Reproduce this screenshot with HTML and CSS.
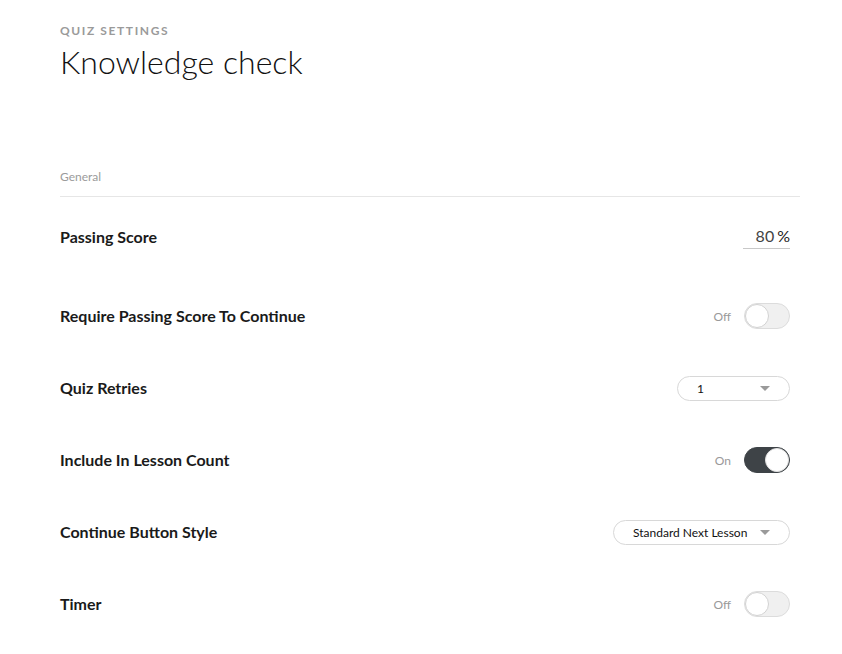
FILE: index.html
```html
<!DOCTYPE html>
<html lang="en">
  <head>
    <meta charset="UTF-8" />
    <title>Quiz Settings</title>
    <link rel="stylesheet" href="styles.css">
  </head>
  <body>
    <div class="page">
      <div class="header">
        <div class="eyebrow">Quiz Settings</div>
        <h1 class="title">Knowledge check</h1>
      </div>

      <div class="section">
        <div class="section-label">General</div>

        <div class="row row-first">
          <div class="label">Passing Score</div>
          <div class="score">
            <span class="score-value">80</span><span class="score-unit">%</span>
          </div>
        </div>

        <div class="row">
          <div class="label">Require Passing Score To Continue</div>
          <div class="control">
            <span class="state">Off</span>
            <span class="toggle"><span class="knob"></span></span>
          </div>
        </div>

        <div class="row">
          <div class="label">Quiz Retries</div>
          <div class="select select-small">
            <span class="select-text">1</span>
            <span class="caret"></span>
          </div>
        </div>

        <div class="row">
          <div class="label">Include In Lesson Count</div>
          <div class="control">
            <span class="state">On</span>
            <span class="toggle on"><span class="knob"></span></span>
          </div>
        </div>

        <div class="row">
          <div class="label">Continue Button Style</div>
          <div class="select select-wide">
            <span class="select-text">Standard Next Lesson</span>
            <span class="caret"></span>
          </div>
        </div>

        <div class="row">
          <div class="label">Timer</div>
          <div class="control">
            <span class="state">Off</span>
            <span class="toggle"><span class="knob"></span></span>
          </div>
        </div>
      </div>
    </div>
  </body>
</html>
```

FILE: styles.css
```css
body {
  margin: 0;
  background: #fff;
  font-family: Lato, "Open Sans", sans-serif;
  color: #1b1b1b;
}
.page {
  width: 740px;
  padding: 23px 0 0 60px;
}
.eyebrow {
  font-size: 12px;
  font-weight: 700;
  letter-spacing: 1.6px;
  text-transform: uppercase;
  color: #9a9a9a;
  line-height: 15px;
}
.title {
  margin: 4px 0 0;
  font-size: 32px;
  font-weight: 300;
  line-height: 40px;
  color: #111;
}
.section {
  margin-top: 87px;
}
.section-label {
  font-size: 12px;
  color: #9b9b9b;
  padding-bottom: 12px;
  border-bottom: 1px solid #e6e6e6;
}
.row {
  display: flex;
  justify-content: space-between;
  align-items: center;
  height: 72px;
  padding-right: 10px;
}
.row-first {
  margin-top: 4px;
  height: 72px;
  margin-bottom: 7px;
}
.label {
  font-size: 16px;
  font-weight: 700;
  color: #1a1a1a;
  margin-bottom: 2px;
}
.score {
  width: 47px;
  text-align: right;
  border-bottom: 1px solid #c8c8c8;
  padding-bottom: 3px;
  font-size: 16px;
  color: #444;
  margin-top: 1px;
}
.score-unit {
  margin-left: 3px;
  color: #1b1b1b;
}
.control {
  display: flex;
  align-items: center;
  gap: 13px;
}
.state {
  font-size: 12px;
  color: #999;
}
.toggle {
  position: relative;
  width: 44px;
  height: 24px;
  border: 1px solid #dcdcdc;
  border-radius: 13px;
  background: #f0f0f0;
  box-sizing: content-box;
}
.knob {
  position: absolute;
  top: 0;
  left: 0;
  width: 22px;
  height: 22px;
  border: 1px solid #d2d2d2;
  border-radius: 50%;
  background: #fff;
}
.toggle.on {
  background: #3e4347;
  border-color: #3e4347;
}
.toggle.on .knob {
  left: 20px;
  border-color: #e2e2e2;
}
.select {
  display: flex;
  align-items: center;
  justify-content: space-between;
  height: 23px;
  border: 1px solid #d8d8d8;
  border-radius: 13px;
  box-sizing: content-box;
  font-size: 12px;
  color: #111;
  margin-top: 1px;
}
.select-small {
  width: 111px;
}
.select-small .select-text {
  margin-left: 19px;
}
.select-wide {
  width: 175px;
}
.select-wide .select-text {
  margin-left: 19px;
}
.caret {
  width: 0;
  height: 0;
  margin-right: 19px;
  border-left: 5px solid transparent;
  border-right: 5px solid transparent;
  border-top: 5px solid #9a9a9a;
}
```
